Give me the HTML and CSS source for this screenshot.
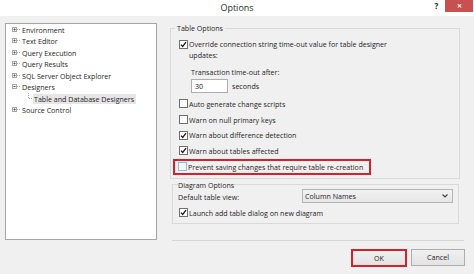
FILE: index.html
```html
<!DOCTYPE html>
<html>
<head>
<meta charset="utf-8">
<title>Options</title>
<link rel="stylesheet" href="styles.css">
</head>
<body>
<div class="window">
  <div class="titlebar">
    <div class="title">Options</div>
    <div class="controls">
      <div class="help">?</div>
      <div class="close">&#x2715;</div>
    </div>
  </div>

  <div class="main">
    <div class="tree">
      <div class="node"><svg class="exp" width="16" height="12" viewBox="0 0 16 12"><rect x="6.5" y="3.5" width="4" height="4" fill="#fff" stroke="#a8a8a8"/><path d="M7.5 5.5h2M8.5 4.5v2" stroke="#555"/><path d="M11 5.5h4" stroke="#b0b0b0" stroke-dasharray="1 1"/></svg><span>Environment</span></div>
      <div class="node"><svg class="exp" width="16" height="12" viewBox="0 0 16 12"><rect x="6.5" y="3.5" width="4" height="4" fill="#fff" stroke="#a8a8a8"/><path d="M7.5 5.5h2M8.5 4.5v2" stroke="#555"/><path d="M11 5.5h4" stroke="#b0b0b0" stroke-dasharray="1 1"/></svg><span>Text Editor</span></div>
      <div class="node"><svg class="exp" width="16" height="12" viewBox="0 0 16 12"><rect x="6.5" y="3.5" width="4" height="4" fill="#fff" stroke="#a8a8a8"/><path d="M7.5 5.5h2M8.5 4.5v2" stroke="#555"/><path d="M11 5.5h4" stroke="#b0b0b0" stroke-dasharray="1 1"/></svg><span>Query Execution</span></div>
      <div class="node"><svg class="exp" width="16" height="12" viewBox="0 0 16 12"><rect x="6.5" y="3.5" width="4" height="4" fill="#fff" stroke="#a8a8a8"/><path d="M7.5 5.5h2M8.5 4.5v2" stroke="#555"/><path d="M11 5.5h4" stroke="#b0b0b0" stroke-dasharray="1 1"/></svg><span>Query Results</span></div>
      <div class="node"><svg class="exp" width="16" height="12" viewBox="0 0 16 12"><rect x="6.5" y="3.5" width="4" height="4" fill="#fff" stroke="#a8a8a8"/><path d="M7.5 5.5h2M8.5 4.5v2" stroke="#555"/><path d="M11 5.5h4" stroke="#b0b0b0" stroke-dasharray="1 1"/></svg><span>SQL Server Object Explorer</span></div>
      <div class="node"><svg class="exp" width="16" height="12" viewBox="0 0 16 12"><rect x="6.5" y="3.5" width="4" height="4" fill="#fff" stroke="#a8a8a8"/><path d="M7.5 5.5h2" stroke="#555"/><path d="M11 5.5h4" stroke="#b0b0b0" stroke-dasharray="1 1"/></svg><span>Designers</span></div>
      <div class="node"><svg class="exp" width="28" height="12" viewBox="0 0 28 12"><path d="M22.5 0v6M23 5.5h4" stroke="#a0a0a0" stroke-dasharray="1 1"/></svg><span class="selected">Table and Database Designers</span></div>
      <div class="node"><svg class="exp" width="16" height="12" viewBox="0 0 16 12"><rect x="6.5" y="3.5" width="4" height="4" fill="#fff" stroke="#a8a8a8"/><path d="M7.5 5.5h2M8.5 4.5v2" stroke="#555"/><path d="M11 5.5h4" stroke="#b0b0b0" stroke-dasharray="1 1"/></svg><span>Source Control</span></div>
    </div>

    <div class="pane">
      <fieldset class="group table-opts">
        <legend>Table Options</legend>
        <div class="check multi">
          <span class="box"><svg width="7" height="7" viewBox="0 0 7 7"><path d="M1 3.6L2.7 5.5L6 1.2" stroke="#1a1a1a" stroke-width="1.3" fill="none"/></svg></span>
          <span class="label">Override connection string time-out value for table designer<br>updates:</span>
        </div>
        <div class="sublabel">Transaction time-out after:</div>
        <div class="timeout">
          <div class="input">30</div>
          <span>seconds</span>
        </div>
        <div class="check rows first"><span class="box"></span><span class="label">Auto generate change scripts</span></div>
        <div class="check rows"><span class="box"></span><span class="label">Warn on null primary keys</span></div>
        <div class="check rows"><span class="box"><svg width="7" height="7" viewBox="0 0 7 7"><path d="M1 3.6L2.7 5.5L6 1.2" stroke="#1a1a1a" stroke-width="1.3" fill="none"/></svg></span><span class="label">Warn about difference detection</span></div>
        <div class="check rows"><span class="box"><svg width="7" height="7" viewBox="0 0 7 7"><path d="M1 3.6L2.7 5.5L6 1.2" stroke="#1a1a1a" stroke-width="1.3" fill="none"/></svg></span><span class="label">Warn about tables affected</span></div>
        <div class="check highlight"><span class="box hot"></span><span class="label">Prevent saving changes that require table re-creation</span></div>
      </fieldset>

      <fieldset class="group diagram">
        <legend>Diagram Options</legend>
        <div class="view-row">
          <span class="view-label">Default table view:</span>
          <div class="select"><span>Column Names</span><svg width="6" height="4" viewBox="0 0 6 4"><path d="M0.5 0.5L3 3L5.5 0.5" stroke="#444" stroke-width="1.2" fill="none"/></svg></div>
        </div>
        <div class="check launch"><span class="box"><svg width="7" height="7" viewBox="0 0 7 7"><path d="M1 3.6L2.7 5.5L6 1.2" stroke="#1a1a1a" stroke-width="1.3" fill="none"/></svg></span><span class="label">Launch add table dialog on new diagram</span></div>
      </fieldset>

      <div class="separator"></div>
    </div>
  </div>

  <div class="buttons">
    <div class="btn ok">OK</div>
    <div class="btn">Cancel</div>
  </div>
</div>
</body>
</html>
```

FILE: styles.css
```css
* { box-sizing: border-box; }

html, body {
  margin: 0;
  padding: 0;
}

body {
  width: 474px;
  height: 274px;
  overflow: hidden;
  background: #f0f0f0;
  font-family: "Open Sans", "Noto Sans", sans-serif;
  font-size: 7.1px;
  color: #1e1e1e;
}

.window {
  width: 474px;
  height: 274px;
  display: flex;
  flex-direction: column;
  background: #f0f0f0;
}

/* title bar */
.titlebar {
  height: 16px;
  flex: none;
  background: #ffffff;
  display: grid;
  grid-template-columns: 1fr auto 1fr;
  align-items: start;
}

.title {
  grid-column: 2;
  font-size: 9px;
  line-height: 16px;
  color: #2a2a2a;
}

.controls {
  grid-column: 3;
  justify-self: end;
  display: flex;
  align-items: flex-start;
}

.help {
  width: 9px;
  margin-right: 4px;
  font-size: 8px;
  font-weight: bold;
  line-height: 11px;
  text-align: center;
  color: #222;
}

.close {
  width: 28px;
  height: 12px;
  margin-right: 1px;
  background: #c75050;
  color: #fff;
  font-size: 6px;
  font-weight: bold;
  line-height: 12px;
  text-align: center;
}

/* main area */
.main {
  display: flex;
  padding: 7px 0 0 5px;
}

.tree {
  width: 152px;
  height: 217px;
  flex: none;
  background: #fff;
  border: 1px solid #a5a5a5;
  padding-top: 0;
}

.node {
  display: flex;
  align-items: center;
  height: 11.5px;
  white-space: nowrap;
}

.exp { flex: none; display: block; }

.selected {
  background: #e6e6e6;
  padding: 0 2px 0 1px;
  margin-left: -1px;
  line-height: 10px;
}

.pane {
  width: 294px;
  margin-left: 13px;
  display: flex;
  flex-direction: column;
}

.group {
  margin: 0;
  min-width: 0;
  border: 1px solid #d9d9d9;
}

.group legend {
  line-height: 10px;
  padding: 0 2px;
}

.table-opts {
  margin-right: 4px;
  padding: 0 0 3px 8px;
}

.table-opts legend {
  margin-left: -4px;
}

.check {
  display: flex;
  align-items: center;
  white-space: nowrap;
}

.box {
  width: 9px;
  height: 9px;
  flex: none;
  border: 1px solid #707070;
  background: #fff;
  margin-right: 1px;
  display: flex;
  align-items: center;
  justify-content: center;
}

.box.hot {
  border-color: #95b9d9;
  background: #f3f8fd;
}

.multi {
  align-items: flex-start;
  margin-top: 5.5px;
  line-height: 11px;
}

.multi .box { margin-top: 1px; }

.sublabel {
  margin-top: 6px;
  padding-left: 12px;
  line-height: 11px;
}

.timeout {
  display: flex;
  align-items: center;
  margin-top: 1.5px;
  padding-left: 12px;
}

.input {
  width: 37px;
  height: 14px;
  border: 1px solid #abadb3;
  background: #fff;
  padding-left: 3px;
  line-height: 12px;
  margin-right: 4px;
}

.rows { height: 15.6px; }

.rows.first { margin-top: 3.2px; }

.highlight {
  height: 16px;
  width: 198px;
  margin-left: -6px;
  padding-left: 3px;
  border: 2px solid #d6212d;
}

.diagram {
  margin: 2px 5px 0 2px;
  padding: 0 5px 4.5px 6px;
}

.diagram legend {
  line-height: 8px;
  padding: 0;
  margin-left: -1px;
}

.view-row {
  display: flex;
  align-items: center;
  height: 14px;
}

.view-label {
  flex: 1;
  margin-left: -1px;
  padding-top: 2px;
}

.select {
  width: 151px;
  height: 14px;
  border: 1px solid #b5b5b5;
  background: linear-gradient(#f2f2f2, #e6e6e6);
  display: flex;
  align-items: center;
  justify-content: space-between;
  padding: 0 4px 0 2px;
}

.select svg { display: block; }

.launch {
  height: 11px;
  margin-top: 4.5px;
}

.separator {
  height: 1px;
  margin: 16px 0 0 2px;
  background: #d6d6d6;
}

/* buttons */
.buttons {
  display: flex;
  justify-content: flex-end;
  gap: 4px;
  margin-top: 8px;
  padding-right: 9px;
}

.btn {
  width: 54px;
  height: 17px;
  border: 1px solid #adadad;
  background: linear-gradient(#f0f0f0, #e3e3e3);
  text-align: center;
  line-height: 15px;
}

.btn.ok {
  width: 56px;
  height: 18px;
  border: 2px solid #d6212d;
  line-height: 14px;
}
```
